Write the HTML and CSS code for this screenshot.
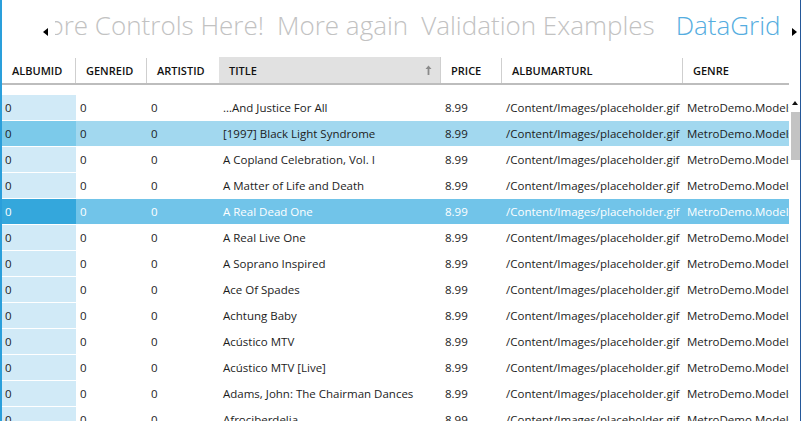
FILE: index.html
```html
<!DOCTYPE html>
<html>
<head>
<meta charset="utf-8">
<link rel="stylesheet" href="styles.css">
</head>
<body>
<div class="window">
  <div class="tabbar">
    <svg class="arrow" width="6" height="8" viewBox="0 0 6 8"><path d="M5 0 L0 4 L5 8 Z" fill="#000"/></svg>
    <div class="tabs-view">
      <div class="tabs">
        <span class="tab">More Controls Here!</span>
        <span class="tab">More again</span>
        <span class="tab">Validation Examples</span>
        <span class="tab active">DataGrid</span>
      </div>
    </div>
    <svg class="arrow" width="6" height="8" viewBox="0 0 6 8"><path d="M0 0 L5 4 L0 8 Z" fill="#000"/></svg>
  </div>

  <div class="grid">
    <div class="header">
      <div class="hcell sep">ALBUMID</div>
      <div class="hcell sep">GENREID</div>
      <div class="hcell">ARTISTID</div>
      <div class="hcell sorted"><span>TITLE</span><svg width="7" height="10" viewBox="0 0 7 10"><path d="M3.5 0.5 L0.5 4 H2.6 V10 H4.4 V4 H6.5 Z" fill="#8a8a8a"/></svg></div>
      <div class="hcell sep">PRICE</div>
      <div class="hcell sep">ALBUMARTURL</div>
      <div class="hcell">GENRE</div>
    </div>
    <div class="body">
      <div class="rows">
        <div class="row"><div class="cell id">0</div><div class="cell">0</div><div class="cell">0</div><div class="cell">…And Justice For All</div><div class="cell">8.99</div><div class="cell">/Content/Images/placeholder.gif</div><div class="cell">MetroDemo.Models.Genre</div></div>
        <div class="row hover"><div class="cell id">0</div><div class="cell">0</div><div class="cell">0</div><div class="cell">[1997] Black Light Syndrome</div><div class="cell">8.99</div><div class="cell">/Content/Images/placeholder.gif</div><div class="cell">MetroDemo.Models.Genre</div></div>
        <div class="row"><div class="cell id">0</div><div class="cell">0</div><div class="cell">0</div><div class="cell">A Copland Celebration, Vol. I</div><div class="cell">8.99</div><div class="cell">/Content/Images/placeholder.gif</div><div class="cell">MetroDemo.Models.Genre</div></div>
        <div class="row"><div class="cell id">0</div><div class="cell">0</div><div class="cell">0</div><div class="cell">A Matter of Life and Death</div><div class="cell">8.99</div><div class="cell">/Content/Images/placeholder.gif</div><div class="cell">MetroDemo.Models.Genre</div></div>
        <div class="row selected"><div class="cell id">0</div><div class="cell">0</div><div class="cell">0</div><div class="cell">A Real Dead One</div><div class="cell">8.99</div><div class="cell">/Content/Images/placeholder.gif</div><div class="cell">MetroDemo.Models.Genre</div></div>
        <div class="row"><div class="cell id">0</div><div class="cell">0</div><div class="cell">0</div><div class="cell">A Real Live One</div><div class="cell">8.99</div><div class="cell">/Content/Images/placeholder.gif</div><div class="cell">MetroDemo.Models.Genre</div></div>
        <div class="row"><div class="cell id">0</div><div class="cell">0</div><div class="cell">0</div><div class="cell">A Soprano Inspired</div><div class="cell">8.99</div><div class="cell">/Content/Images/placeholder.gif</div><div class="cell">MetroDemo.Models.Genre</div></div>
        <div class="row"><div class="cell id">0</div><div class="cell">0</div><div class="cell">0</div><div class="cell">Ace Of Spades</div><div class="cell">8.99</div><div class="cell">/Content/Images/placeholder.gif</div><div class="cell">MetroDemo.Models.Genre</div></div>
        <div class="row"><div class="cell id">0</div><div class="cell">0</div><div class="cell">0</div><div class="cell">Achtung Baby</div><div class="cell">8.99</div><div class="cell">/Content/Images/placeholder.gif</div><div class="cell">MetroDemo.Models.Genre</div></div>
        <div class="row"><div class="cell id">0</div><div class="cell">0</div><div class="cell">0</div><div class="cell">Acústico MTV</div><div class="cell">8.99</div><div class="cell">/Content/Images/placeholder.gif</div><div class="cell">MetroDemo.Models.Genre</div></div>
        <div class="row"><div class="cell id">0</div><div class="cell">0</div><div class="cell">0</div><div class="cell">Acústico MTV [Live]</div><div class="cell">8.99</div><div class="cell">/Content/Images/placeholder.gif</div><div class="cell">MetroDemo.Models.Genre</div></div>
        <div class="row"><div class="cell id">0</div><div class="cell">0</div><div class="cell">0</div><div class="cell">Adams, John: The Chairman Dances</div><div class="cell">8.99</div><div class="cell">/Content/Images/placeholder.gif</div><div class="cell">MetroDemo.Models.Genre</div></div>
        <div class="row"><div class="cell id">0</div><div class="cell">0</div><div class="cell">0</div><div class="cell">Afrociberdelia</div><div class="cell">8.99</div><div class="cell">/Content/Images/placeholder.gif</div><div class="cell">MetroDemo.Models.Genre</div></div>
      </div>
      <div class="scrollbar">
        <svg width="6" height="4" viewBox="0 0 6 4"><path d="M3 0 L6 4 H0 Z" fill="#111"/></svg>
        <div class="thumb"></div>
      </div>
    </div>
  </div>
</div>
</body>
</html>
```

FILE: styles.css
```css
html, body {
  margin: 0;
  padding: 0;
  background: #fff;
}
body {
  width: 802px;
  height: 421px;
  overflow: hidden;
  font-family: "Open Sans", "Noto Sans", sans-serif;
}
.window {
  box-sizing: border-box;
  width: 801px;
  height: 421px;
  border-left: 2px solid #2a9fdb;
  border-right: 1px solid #24589a;
  display: flex;
  flex-direction: column;
  overflow: hidden;
}
.tabbar {
  box-sizing: border-box;
  height: 57px;
  padding: 8px 2px 0 41px;
  display: flex;
  align-items: flex-start;
}
.arrow {
  flex: none;
  margin-top: 20px;
}
.tabs-view {
  flex: 1;
  overflow: hidden;
  margin: 0 9px 0 6px;
}
.tabs {
  display: flex;
  gap: 13px;
  white-space: nowrap;
  margin-left: -29px;
}
.tab {
  font-size: 26px;
  font-weight: 300;
  line-height: 35px;
  color: #c2c2c2;
}
.tab.active {
  color: #55ade0;
  margin-left: 8px;
}
.grid {
  flex: 1;
  display: flex;
  flex-direction: column;
  min-height: 0;
}
.header {
  display: grid;
  grid-template-columns: 74px 71px 72px 222px 61px 181px 106px;
  height: 26px;
  border-bottom: 2px solid #bdbdbd;
  width: 787px;
  margin-bottom: 10px;
}
.hcell {
  font-size: 11px;
  font-weight: 600;
  color: #111;
  padding-left: 10px;
  display: flex;
  align-items: center;
  box-sizing: border-box;
  height: 26px;
}
.hcell.sep {
  border-right: 1px solid #cfcfcf;
  margin: 1px 0 0;
  height: 25px;
}
.hcell.sorted {
  background: #e1e1e1;
  justify-content: space-between;
  padding-right: 8px;
  border-right: 1px solid #cfcfcf;
}
.body {
  flex: 1;
  display: flex;
  min-height: 0;
}
.rows {
  width: 787px;
  overflow: hidden;
}
.row {
  display: grid;
  grid-template-columns: 74px 71px 72px 222px 61px 181px 106px;
  height: 26px;
}
.cell {
  box-sizing: border-box;
  height: 26px;
  border-bottom: 1px solid #fff;
  padding-left: 4px;
  font-size: 11.5px;
  line-height: 25px;
  color: #1c1c1c;
  white-space: nowrap;
  overflow: hidden;
}
.cell.id {
  background: #d1eaf7;
  padding-left: 3px;
}
.row.hover .cell {
  background: #a2d8ef;
}
.row.hover .cell.id {
  background: #7ccaea;
}
.row.selected .cell {
  background: #71c4e9;
  color: #fff;
}
.row.selected .cell.id {
  background: #34a7dc;
}
.scrollbar {
  width: 10px;
  margin-left: 1px;
  display: flex;
  flex-direction: column;
  align-items: center;
  padding-top: 6px;
  gap: 7px;
}
.thumb {
  width: 9px;
  height: 48px;
  background: #c3c3c3;
}
```
